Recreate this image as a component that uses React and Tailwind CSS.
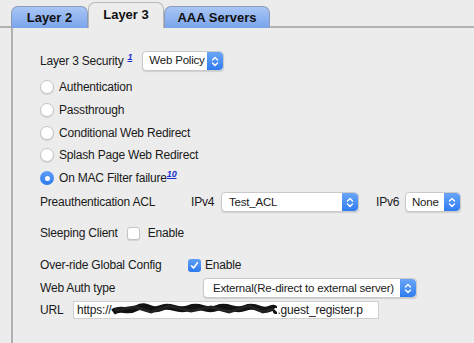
import React from "react";

const font = { fontFamily: '"Liberation Sans", Arial, sans-serif' };

function Stepper() {
  return (
    <div className="flex h-[18px] w-[16px] shrink-0 items-center justify-center rounded-r-[4px] bg-gradient-to-b from-[#6aa6f8] to-[#2f7cf0]">
      <svg width="8" height="11" viewBox="0 0 8 11" fill="none" stroke="white" strokeWidth="1.4" strokeLinecap="round" strokeLinejoin="round">
        <path d="M1.5 4 L4 1.5 L6.5 4" />
        <path d="M1.5 7 L4 9.5 L6.5 7" />
      </svg>
    </div>
  );
}

function Select({ w, children, textCls = "pl-[6px]" }) {
  return (
    <div className={`flex h-[20px] ${w} shrink-0 items-center justify-between overflow-hidden rounded-[4px] border border-[#c9c9c9] bg-white shadow-[0_1px_1px_rgba(0,0,0,0.12)]`}>
      <span className={`${textCls} min-w-0 flex-1 whitespace-nowrap text-[11.5px] tracking-[-0.2px] leading-none text-[#1a1a1a]`}>{children}</span>
      <Stepper />
    </div>
  );
}

function Radio({ checked, label, sup }) {
  return (
    <div className="flex h-[22.7px] items-center">
      {checked ? (
        <div className="flex h-[14px] w-[14px] items-center justify-center rounded-full bg-gradient-to-b from-[#5fa0f7] to-[#2d78ee]">
          <div className="h-[5px] w-[5px] rounded-full bg-white" />
        </div>
      ) : (
        <div className="h-[14px] w-[14px] rounded-full border border-[#c4c4c4] bg-white shadow-[0_1px_1px_rgba(0,0,0,0.1)]" />
      )}
      <span className="ml-[5px]">{label}</span>
      {sup && (
        <span className="-mt-[6px] text-[9px] font-bold italic text-[#1a2fd0] underline">{sup}</span>
      )}
    </div>
  );
}

export default function App() {
  return (
    <div className="h-[343px] w-[474px] overflow-hidden bg-[#ececec]" style={font}>
      {/* Tab strip */}
      <div className="relative flex h-[28px] items-end pl-[11px]">
        <div className="absolute bottom-[0px] left-0 right-0 h-[2px] bg-[#b3b3b3]" />
        <div className="relative flex h-[22px] w-[77px] items-center justify-center rounded-t-[7px] border border-b-0 border-[#8a9bb8] bg-gradient-to-b from-[#a9c6f5] to-[#7aa4ec]">
          <span className="text-[13px] font-bold text-[#111]">Layer 2</span>
        </div>
        <div className="relative z-10 flex h-[26px] w-[76px] items-center justify-center rounded-t-[7px] border border-b-0 border-[#b8b8b8] bg-[#ececec] pb-[1px]">
          <span className="text-[13px] font-bold text-[#111]">Layer 3</span>
        </div>
        <div className="relative flex h-[22px] w-[106px] items-center justify-center rounded-t-[7px] border border-b-0 border-[#8a9bb8] bg-gradient-to-b from-[#a9c6f5] to-[#7aa4ec]">
          <span className="text-[13px] font-bold text-[#111]">AAA Servers</span>
        </div>
      </div>

      {/* Panel */}
      <div className="ml-[11px] h-[315px] border-l-2 border-[#b0b0b0] pl-[27px] pt-[22px] text-[12px] tracking-[-0.2px] text-[#1a1a1a]">
        <div className="flex h-[22px] items-center">
          <span>Layer 3 Security</span>
          <span className="ml-[4px] -mt-[6px] text-[9px] font-bold italic text-[#1a2fd0] underline">1</span>
          <div className="ml-[10px]">
            <Select w="w-[82px]" textCls="pl-[6px]">Web Policy</Select>
          </div>
        </div>

        <div className="mt-[4px]">
          <Radio label="Authentication" />
          <Radio label="Passthrough" />
          <Radio label="Conditional Web Redirect" />
          <Radio label="Splash Page Web Redirect" />
          <Radio checked label="On MAC Filter failure" sup="10" />
        </div>

        <div className="mt-[2px] flex h-[22px] items-center">
          <span className="w-[151px] shrink-0">Preauthentication ACL</span>
          <span className="w-[30px] shrink-0">IPv4</span>
          <Select w="w-[138px]" textCls="pl-[7px]">Test_ACL</Select>
          <span className="ml-[17px] w-[29px] shrink-0">IPv6</span>
          <Select w="w-[56px]" textCls="pl-[6px]">None</Select>
        </div>

        <div className="mt-[9px] flex h-[22px] items-center">
          <span>Sleeping Client</span>
          <div className="ml-[9px] h-[13px] w-[13px] rounded-[3px] border border-[#c4c4c4] bg-white shadow-[0_1px_1px_rgba(0,0,0,0.1)]" />
          <span className="ml-[8px]">Enable</span>
        </div>

        <div className="mt-[10px] flex h-[22px] items-center">
          <span className="w-[148px] shrink-0">Over-ride Global Config</span>
          <div className="flex h-[13px] w-[13px] items-center justify-center rounded-[3px] bg-gradient-to-b from-[#5fa0f7] to-[#2d78ee]">
            <svg width="9" height="9" viewBox="0 0 9 9" fill="none" stroke="white" strokeWidth="1.6" strokeLinecap="round" strokeLinejoin="round">
              <path d="M1.5 4.8 L3.6 7 L7.5 1.8" />
            </svg>
          </div>
          <span className="ml-[4px]">Enable</span>
        </div>

        <div className="mt-[1px] flex h-[22px] items-center">
          <span className="w-[163px] shrink-0">Web Auth type</span>
          <Select w="w-[214px]" textCls="pl-[9px]">External(Re-direct to external server)</Select>
        </div>

        <div className="flex h-[22px] items-center">
          <span className="w-[33px] shrink-0">URL</span>
          <div className="flex h-[18px] w-[306px] shrink-0 items-center overflow-hidden border border-[#cfcfcf] bg-white pl-[3px] whitespace-nowrap">
            <span>https://</span>
            <svg width="166" height="14" viewBox="0 0 166 14" className="shrink-0">
              <path d="M2 9 C10 3, 16 11, 26 5 S40 10, 50 5 S66 10, 78 5 S94 10, 106 5 S122 10, 134 5 S150 10, 158 6 S164 9, 165 8" stroke="#111" strokeWidth="6" fill="none" />
              <path d="M4 7 L24 4 L40 9 L58 3 L80 8 L100 4 L118 9 L138 3 L152 9 L163 6" stroke="#222" strokeWidth="3" fill="none" />
            </svg>
            <span>.guest_register.p</span>
          </div>
        </div>
      </div>
    </div>
  );
}
